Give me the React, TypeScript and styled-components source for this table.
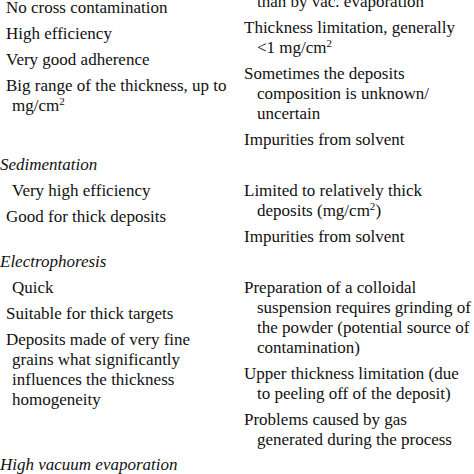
import React from "react";
import styled, { createGlobalStyle } from "styled-components";

const GlobalStyle = createGlobalStyle`
  html, body {
    margin: 0;
    padding: 0;
    background: #ffffff;
  }
  body {
    overflow: hidden;
    font-family: "Liberation Serif", "Times New Roman", serif;
    color: #111111;
  }
`;

type Line = React.ReactNode;

interface Item {
  lines: Line[];
  shifted?: boolean;
}

interface Section {
  title?: string;
  tail?: Line;
  pros: Item[];
  cons: Item[];
}

const Page = styled.div`
  width: 474px;
  height: 474px;
  overflow: hidden;
`;

const Table = styled.div`
  display: flex;
  flex-direction: column;
  gap: 5px;
  margin-top: -8px;
  font-size: 17px;
  line-height: 20px;
`;

const SectionBlock = styled.div`
  display: flex;
  flex-direction: column;
  gap: 6px;
`;

const Title = styled.div`
  font-style: italic;
  white-space: nowrap;
`;

const Row = styled.div`
  display: grid;
  grid-template-columns: 244px 1fr;
`;

const List = styled.div<{ $offset?: number }>`
  display: flex;
  flex-direction: column;
  gap: 6px;
  padding-top: ${(p) => p.$offset ?? 0}px;
`;

const Entry = styled.div<{ $left: number; $indent: number }>`
  padding-left: ${(p) => p.$left}px;
  white-space: nowrap;

  span {
    display: block;
  }

  span + span {
    padding-left: ${(p) => p.$indent}px;
  }
`;

const Tail = styled.div`
  padding-left: 13px;
  white-space: nowrap;
`;

const Sup = styled.sup`
  font-size: 0.65em;
  line-height: 0;
  vertical-align: 0.55em;
`;

const cm2 = (
  <>
    mg/cm<Sup>2</Sup>
  </>
);

const sections: Section[] = [
  {
    tail: "than by vac. evaporation",
    pros: [
      { lines: ["No cross contamination"] },
      { lines: ["High efficiency"] },
      { lines: ["Very good adherence"] },
      { lines: ["Big range of the thickness, up to", cm2] },
    ],
    cons: [
      { lines: ["Thickness limitation, generally", <>&lt;1 {cm2}</>] },
      { lines: ["Sometimes the deposits", "composition is unknown/", "uncertain"] },
      { lines: ["Impurities from solvent"] },
    ],
  },
  {
    title: "Sedimentation",
    pros: [
      { lines: ["Very high efficiency"], shifted: true },
      { lines: ["Good for thick deposits"] },
    ],
    cons: [
      { lines: ["Limited to relatively thick", <>deposits ({cm2})</>] },
      { lines: ["Impurities from solvent"] },
    ],
  },
  {
    title: "Electrophoresis",
    pros: [
      { lines: ["Quick"], shifted: true },
      { lines: ["Suitable for thick targets"] },
      {
        lines: [
          "Deposits made of very fine",
          "grains what significantly",
          "influences the thickness",
          "homogeneity",
        ],
      },
    ],
    cons: [
      {
        lines: [
          "Preparation of a colloidal",
          "suspension requires grinding of",
          "the powder (potential source of",
          "contamination)",
        ],
      },
      { lines: ["Upper thickness limitation (due", "to peeling off of the deposit)"] },
      { lines: ["Problems caused by gas", "generated during the process"] },
    ],
  },
  {
    title: "High vacuum evaporation",
    pros: [],
    cons: [],
  },
];

function Entries({ items, left, indent }: { items: Item[]; left: number; indent: number }) {
  return (
    <>
      {items.map((item, i) => (
        <Entry key={i} $left={item.shifted ? left + 6 : left} $indent={indent}>
          {item.lines.map((line, j) => (
            <span key={j}>{line}</span>
          ))}
        </Entry>
      ))}
    </>
  );
}

export default function App() {
  return (
    <Page>
      <GlobalStyle />
      <Table>
        {sections.map((s, i) => (
          <SectionBlock key={i}>
            {s.title && <Title>{s.title}</Title>}
            {(s.pros.length > 0 || s.cons.length > 0) && (
              <Row>
                <List $offset={s.tail ? 6 : 0}>
                  <Entries items={s.pros} left={6} indent={6} />
                </List>
                <List>
                  {s.tail && <Tail>{s.tail}</Tail>}
                  <Entries items={s.cons} left={0} indent={13} />
                </List>
              </Row>
            )}
          </SectionBlock>
        ))}
      </Table>
    </Page>
  );
}
